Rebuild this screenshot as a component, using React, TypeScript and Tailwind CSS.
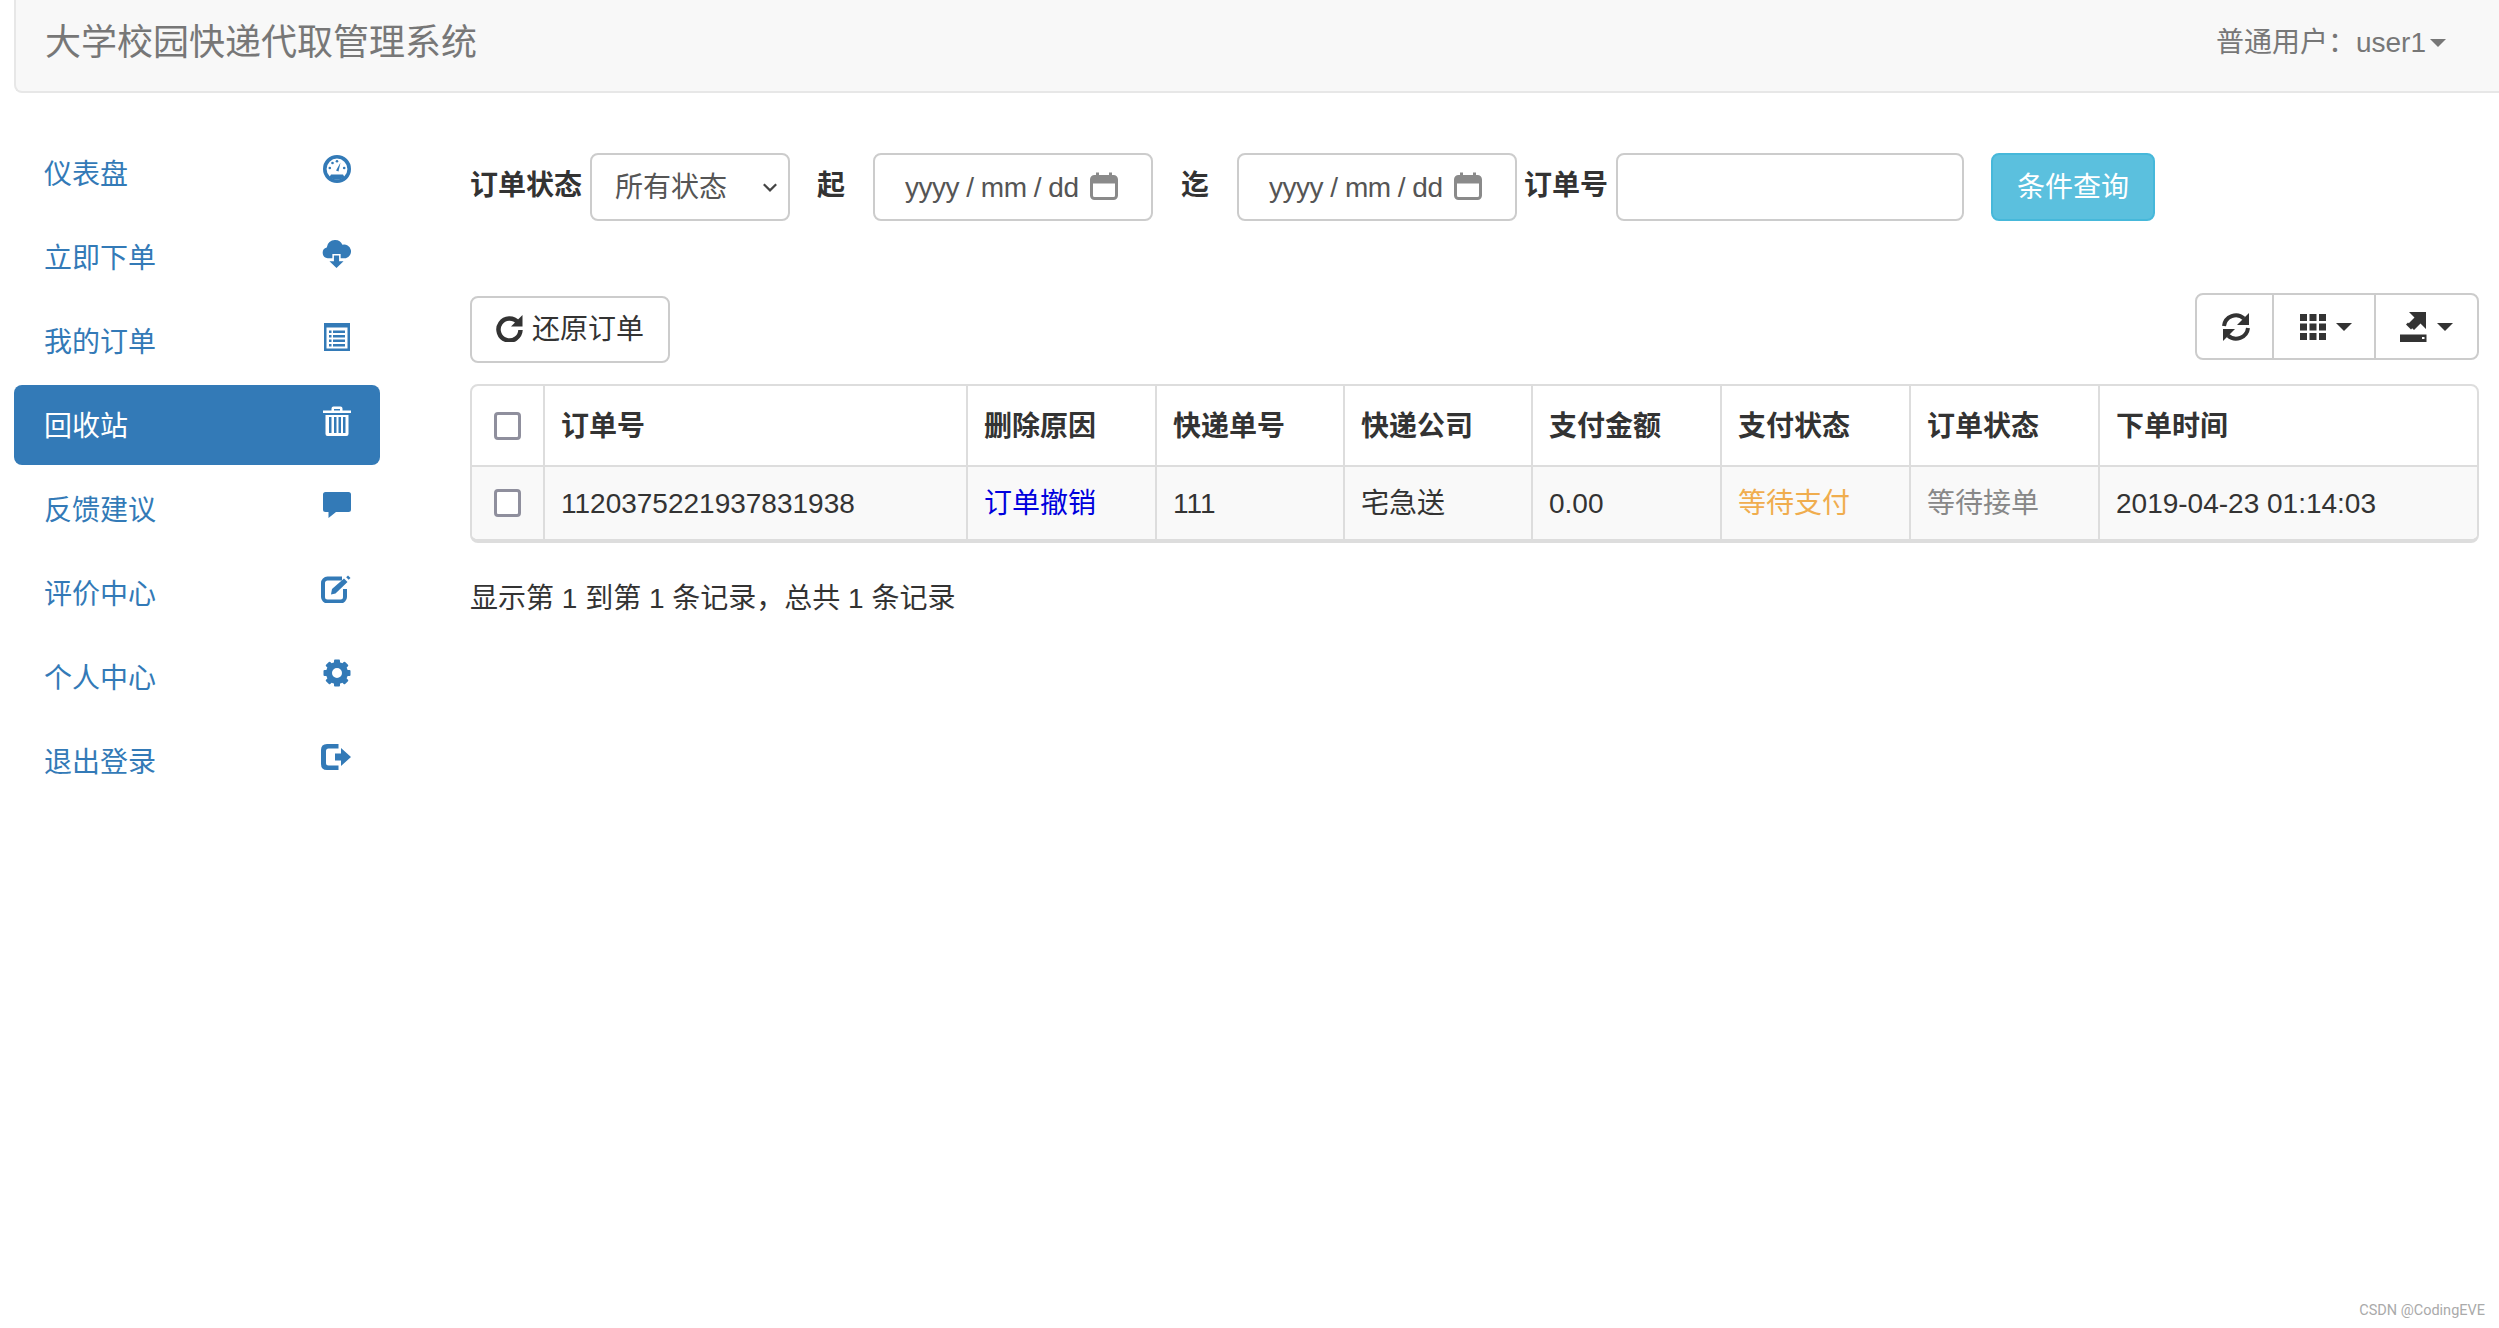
import React from 'react';

type IconProps = { className?: string };

function DashboardIcon({ className }: IconProps) {
  return (
    <svg viewBox="0 0 28 28" className={className} fill="none">
      <circle cx="14" cy="14" r="12.2" stroke="currentColor" strokeWidth="3.6" />
      <circle cx="6.8" cy="13" r="1.3" fill="currentColor" />
      <circle cx="9.5" cy="8" r="1.3" fill="currentColor" />
      <circle cx="14" cy="6.2" r="1.3" fill="currentColor" />
      <circle cx="21.2" cy="13" r="1.3" fill="currentColor" />
      <path d="M13 15.5 17.5 7.5 15.5 16.5z" fill="currentColor" />
      <path d="M8 19.5h12l1.5 2.5a12 12 0 0 1-15 0z" fill="currentColor" />
    </svg>
  );
}

function CloudIcon({ className }: IconProps) {
  return (
    <svg viewBox="0 0 28 28" className={className} fill="currentColor">
      <path d="M23 18.5h-5v-4h-8v4H5.5a5.3 5.3 0 0 1-.9-10.4A7.8 7.8 0 0 1 12.7 1a7.5 7.5 0 0 1 7 4.6A6.5 6.5 0 0 1 23 18.5z" />
      <path d="M11.5 16h5v5.5h4.3L14 28l-6.8-6.5h4.3z" />
    </svg>
  );
}

function ListIcon({ className }: IconProps) {
  return (
    <svg viewBox="0 0 28 28" className={className} fill="currentColor">
      <path fillRule="evenodd" d="M1 0h26v28H1zM3.5 4.5v21h21v-21z" />
      <path d="M6 7.5h2.5v2.5H6zM10 7.5h12V10H10zM6 12h2.5v2.5H6zM10 12h12v2.5H10zM6 16.5h2.5V19H6zM10 16.5h12V19H10zM6 21h2.5v2.5H6zM10 21h12v2.5H10z" />
    </svg>
  );
}

function TrashIcon({ className }: IconProps) {
  return (
    <svg viewBox="0 0 28 30" className={className} fill="currentColor">
      <path fillRule="evenodd" d="M8.5 4.5V2.5Q8.5 0.5 10.5 0.5h7q2 0 2 2v2H28V7H0V4.5zM11 4.5h6V3h-6z" />
      <path fillRule="evenodd" d="M2.5 9h23v19q0 2-2 2h-19q-2 0-2-2zM6 11v16h2.5V11zM11 11v16h2.5V11zM15.5 11v16H18V11zM20 11v16h2.5V11z" />
    </svg>
  );
}

function CommentIcon({ className }: IconProps) {
  return (
    <svg viewBox="0 0 28 26" className={className} fill="currentColor">
      <path d="M2.5 0h23A2.5 2.5 0 0 1 28 2.5v15a2.5 2.5 0 0 1-2.5 2.5H13l-7.5 6v-6h-3A2.5 2.5 0 0 1 0 17.5v-15A2.5 2.5 0 0 1 2.5 0z" />
    </svg>
  );
}

function EditIcon({ className }: IconProps) {
  return (
    <svg viewBox="0 0 30 28" className={className} fill="none">
      <path d="M21 3.5H6.5A4.5 4.5 0 0 0 2 8v14a4.5 4.5 0 0 0 4.5 4.5h13a4.5 4.5 0 0 0 4.5-4.5v-8" stroke="currentColor" strokeWidth="4" />
      <path d="M11 14 23 3.5l3.5 3.5-12 11.5-4.5 1z" fill="currentColor" />
      <path d="M27 0.5 29.5 3l-1.8 1.8-2.5-2.5z" fill="currentColor" />
    </svg>
  );
}

function CogIcon({ className }: IconProps) {
  const teeth = [0, 45, 90, 135, 180, 225, 270, 315];
  return (
    <svg viewBox="0 0 28 28" className={className} fill="none">
      <circle cx="14" cy="14" r="8" stroke="currentColor" strokeWidth="6" />
      {teeth.map((a) => (
        <rect key={a} x="11" y="0.5" width="6" height="6" rx="1" fill="currentColor" transform={`rotate(${a} 14 14)`} />
      ))}
    </svg>
  );
}

function LogoutIcon({ className }: IconProps) {
  return (
    <svg viewBox="0 0 30 28" className={className} fill="currentColor">
      <path d="M6 1h11.5v4.5H7.5Q5 5.5 5 8v12q0 2.5 2.5 2.5h10V27H6q-6 0-6-6V7q0-6 6-6z" />
      <path d="M14 10.5h6V5l10 9-10 9v-5.5h-6z" />
    </svg>
  );
}

function RepeatIcon({ className }: IconProps) {
  return (
    <svg viewBox="0 0 28 28" className={className} fill="none">
      <path d="M22 8.5A11 11 0 1 0 24.5 16" stroke="currentColor" strokeWidth="4.5" />
      <path d="M26.5 1v11.5H15z" fill="currentColor" />
    </svg>
  );
}

function RefreshIcon({ className }: IconProps) {
  return (
    <svg viewBox="0 0 28 28" className={className} fill="none">
      <path d="M2 13A12 12 0 0 1 22 5.5" stroke="currentColor" strokeWidth="4" />
      <path d="M27 0v12H15z" fill="currentColor" />
      <path d="M26 15A12 12 0 0 1 6 22.5" stroke="currentColor" strokeWidth="4" />
      <path d="M1 28V16h12z" fill="currentColor" />
    </svg>
  );
}

function GridIcon({ className }: IconProps) {
  return (
    <svg viewBox="0 0 28 28" className={className} fill="currentColor">
      <path d="M1 1h7v7H1zM10.5 1h7v7h-7zM20 1h7v7h-7zM1 10.5h7v7H1zM10.5 10.5h7v7h-7zM20 10.5h7v7h-7zM1 20h7v7H1zM10.5 20h7v7h-7zM20 20h7v7h-7z" />
    </svg>
  );
}

function ExportIcon({ className }: IconProps) {
  return (
    <svg viewBox="0 0 28 30" className={className} fill="currentColor">
      <path d="M9 0h17v17l-5.5-5.5-6.5 6.5-6-6 6.5-6.5z" />
      <path d="M6 12.5l2-2 5 5-2 2z" />
      <path fillRule="evenodd" d="M0 22.5h26.5V30H0zM22 25v2h2.5v-2z" />
    </svg>
  );
}

function CalendarIcon() {
  return (
    <svg viewBox="0 0 28 28" className="mb-[2px] h-[28px] w-[28px] text-[#8a8a8a]" fill="none">
      <rect x="1.5" y="4.5" width="25" height="22" rx="3" stroke="currentColor" strokeWidth="3" />
      <path d="M2 5h24v6.5H2z" fill="currentColor" />
      <path d="M6 0.5h3V5H6zM19 0.5h3V5h-3z" fill="currentColor" />
    </svg>
  );
}

function Caret() {
  return <span className="h-0 w-0 border-x-[8px] border-t-[8px] border-x-transparent border-t-[#333]" />;
}

const navItems = [
  { label: '仪表盘', Icon: DashboardIcon, size: 'w-[28px] h-[28px]' },
  { label: '立即下单', Icon: CloudIcon, size: 'w-[29px] h-[29px]' },
  { label: '我的订单', Icon: ListIcon, size: 'w-[28px] h-[28px]' },
  { label: '回收站', Icon: TrashIcon, size: 'w-[28px] h-[30px]', active: true },
  { label: '反馈建议', Icon: CommentIcon, size: 'w-[28px] h-[26px]' },
  { label: '评价中心', Icon: EditIcon, size: 'w-[30px] h-[28px]' },
  { label: '个人中心', Icon: CogIcon, size: 'w-[28px] h-[28px]' },
  { label: '退出登录', Icon: LogoutIcon, size: 'w-[30px] h-[28px]' },
];

const columns = [
  { title: '订单号', width: 'w-[423px]' },
  { title: '删除原因', width: 'w-[189px]' },
  { title: '快递单号', width: 'w-[188px]' },
  { title: '快递公司', width: 'w-[188px]' },
  { title: '支付金额', width: 'w-[189px]' },
  { title: '支付状态', width: 'w-[189px]' },
  { title: '订单状态', width: 'w-[189px]' },
  { title: '下单时间', width: 'flex-1' },
];

const row = [
  { text: '1120375221937831938', color: 'text-[#333]' },
  { text: '订单撤销', color: 'text-[#0000dd]' },
  { text: '111', color: 'text-[#333]' },
  { text: '宅急送', color: 'text-[#333]' },
  { text: '0.00', color: 'text-[#333]' },
  { text: '等待支付', color: 'text-[#f0ad4e]' },
  { text: '等待接单', color: 'text-[#888]' },
  { text: '2019-04-23 01:14:03', color: 'text-[#333]' },
];

function Checkbox() {
  return <span className="block h-[28px] w-[27px] rounded-[4px] border-[3px] border-[#8f8f9d] bg-white" />;
}

function DateBox() {
  return (
    <div className="flex h-[68px] w-[280px] items-center gap-[11px] rounded-[8px] border-2 border-[#ccc] pl-[30px] text-[#555]">
      <span className="pt-[2px] tracking-[-0.5px]">yyyy / mm / dd</span>
      <CalendarIcon />
    </div>
  );
}

export default function App() {
  return (
    <div className="flex h-[1328px] w-[2499px] flex-col overflow-hidden bg-white font-['Liberation_Sans','Noto_Sans_CJK_SC',sans-serif] text-[28px] leading-[40px] text-[#333]">
      <header className="ml-[14px] flex h-[93px] shrink-0 items-center justify-between rounded-bl-[8px] border-b-2 border-l-2 border-[#e7e7e7] bg-[#f8f8f8] pb-[6px] pl-[29px] pr-[53px] text-[#777]">
        <span className="text-[36px]">大学校园快递代取管理系统</span>
        <span className="flex items-center gap-[4px]">
          普通用户：user1
          <span className="h-0 w-0 border-x-[8px] border-t-[8px] border-x-transparent border-t-[#777]" />
        </span>
      </header>

      <div className="flex flex-1">
        <nav className="ml-[14px] mt-[40px] flex w-[366px] shrink-0 flex-col gap-[4px]">
          {navItems.map(({ label, Icon, size, active }) => (
            <a
              key={label}
              className={`flex h-[80px] items-center justify-between rounded-[8px] pl-[30px] pr-[29px] ${active ? 'bg-[#337ab7] text-white' : 'text-[#337ab7]'}`}
            >
              <span className="pt-[3px]">{label}</span>
              <Icon className={`mb-[8px] ${size}`} />
            </a>
          ))}
        </nav>

        <main className="ml-[90px] w-[2009px] shrink-0">
          <form className="mt-[60px] flex h-[68px] items-center">
            <label className="mb-[2px] font-bold">订单状态</label>
            <div className="ml-[8px] flex h-[68px] w-[200px] items-center justify-between rounded-[8px] border-2 border-[#ccc] pl-[23px] pr-[9px] text-[#555]">
              <span className="pt-[2px]">所有状态</span>
              <svg viewBox="0 0 16 16" className="h-[18px] w-[18px]" fill="none">
                <path d="M2.5 5.5 8 11l5.5-5.5" stroke="#444" strokeWidth="2" />
              </svg>
            </div>
            <label className="mb-[2px] ml-[27px] font-bold">起</label>
            <div className="ml-[28px]">
              <DateBox />
            </div>
            <label className="mb-[2px] ml-[28px] font-bold">迄</label>
            <div className="ml-[28px]">
              <DateBox />
            </div>
            <label className="mb-[2px] ml-[7px] font-bold">订单号</label>
            <input className="ml-[8px] h-[68px] w-[348px] rounded-[8px] border-2 border-[#ccc] bg-white outline-none" />
            <button type="button" className="ml-[27px] h-[68px] w-[164px] rounded-[8px] border-2 border-[#46b8da] bg-[#5bc0de] pt-[2px] text-white">
              条件查询
            </button>
          </form>

          <div className="mt-[72px] flex h-[69px] items-start justify-between">
            <button type="button" className="mt-[3px] flex h-[67px] w-[200px] items-center justify-center gap-[8px] rounded-[8px] border-2 border-[#ccc] bg-white">
              <RepeatIcon className="mb-[4px] h-[28px] w-[28px]" />
              还原订单
            </button>
            <div className="flex h-[67px] w-[284px] rounded-[8px] border-2 border-[#ccc]">
              <span className="flex w-[77px] items-center justify-center border-r-2 border-[#ccc] pl-[2px]">
                <RefreshIcon className="h-[28px] w-[28px]" />
              </span>
              <span className="flex w-[102px] items-center justify-center gap-[9px] border-r-2 border-[#ccc] pl-[2px]">
                <GridIcon className="h-[28px] w-[28px]" />
                <Caret />
              </span>
              <span className="flex flex-1 items-center justify-center gap-[9px]">
                <ExportIcon className="h-[30px] w-[28px]" />
                <Caret />
              </span>
            </div>
          </div>

          <div className="mt-[22px] w-[2009px] rounded-[8px] border-x-2 border-t-2 border-b-[4px] border-[#ddd]">
            <div className="flex h-[81px] border-b-2 border-[#ddd] font-bold">
              <div className="flex w-[73px] shrink-0 items-center justify-center border-r-2 border-[#ddd]">
                <Checkbox />
              </div>
              {columns.map((c, i) => (
                <div
                  key={c.title}
                  className={`flex items-center pl-[16px] pt-[3px] ${c.width} ${i < columns.length - 1 ? 'shrink-0 border-r-2 border-[#ddd]' : ''}`}
                >
                  {c.title}
                </div>
              ))}
            </div>
            <div className="flex h-[72px] rounded-b-[6px] bg-[#f9f9f9]">
              <div className="flex w-[73px] shrink-0 items-center justify-center border-r-2 border-[#ddd]">
                <Checkbox />
              </div>
              {row.map((cell, i) => (
                <div
                  key={cell.text}
                  className={`flex items-center pl-[16px] pt-[2px] ${columns[i].width} ${cell.color} ${i < row.length - 1 ? 'shrink-0 border-r-2 border-[#ddd]' : ''}`}
                >
                  {cell.text}
                </div>
              ))}
            </div>
          </div>

          <p className="mt-[36px]">显示第 1 到第 1 条记录，总共 1 条记录</p>
        </main>
      </div>

      <div className="mb-[8px] mr-[14px] text-right font-['Roboto',sans-serif] text-[14.5px] leading-[18px] text-[#aaa]">CSDN @CodingEVE</div>
    </div>
  );
}
